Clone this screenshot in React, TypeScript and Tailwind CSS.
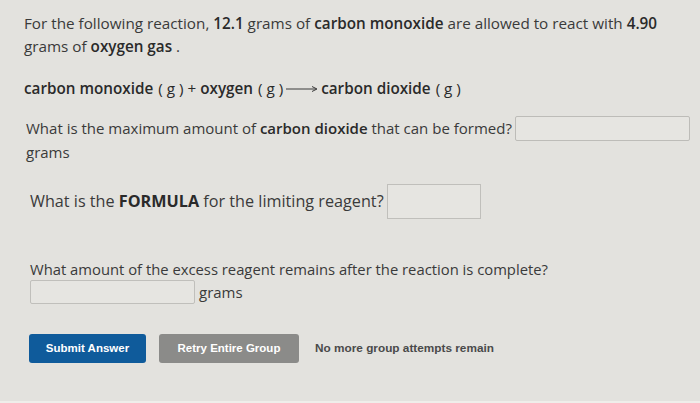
import React from "react";

function Arrow() {
  return (
    <svg width="34" height="10" viewBox="0 0 34 10" className="inline-block mx-[2px]">
      <line x1="1" y1="5" x2="31" y2="5" stroke="#3b3b3b" strokeWidth="1" />
      <path d="M27 2.5 L32 5 L27 7.5" fill="none" stroke="#3b3b3b" strokeWidth="1" />
    </svg>
  );
}

export default function App() {
  return (
    <div className="w-[700px] h-[403px] bg-[#e3e2de] font-['Open_Sans',sans-serif] text-[#3a3a3a] overflow-hidden flex flex-col">
      <div className="flex-1 pl-[24px] pt-[12px]">
        <p className="text-[15.25px] leading-[23px] w-[670px]">
          For the following reaction, <b className="font-semibold text-[#2a2a2a]">12.1</b> grams of{" "}
          <b className="font-semibold text-[#2a2a2a]">carbon monoxide</b> are allowed to react with{" "}
          <b className="font-semibold text-[#2a2a2a]">4.90</b>
          <br />
          grams of <b className="font-semibold text-[#2a2a2a]">oxygen gas</b> .
        </p>
        <p className="mt-[19px] text-[15.25px] leading-[23px] font-semibold text-[#2a2a2a] flex items-center">
          <span>carbon monoxide</span>
          <span className="font-normal ml-[5px]">( g )</span>
          <span className="font-normal mx-[4px]">+</span>
          <span>oxygen</span>
          <span className="font-normal ml-[5px]">( g )</span>
          <Arrow />
          <span>carbon dioxide</span>
          <span className="font-normal ml-[5px]">( g )</span>
        </p>
        <div className="mt-[16px] ml-[2px] flex items-center">
          <span className="text-[15px] leading-[23px]">
            What is the maximum amount of <b className="font-semibold text-[#2a2a2a]">carbon dioxide</b> that can be formed?
          </span>
          <div className="ml-[3px] w-[175px] h-[25px] border border-[#bdbcb8] rounded-[2px] bg-[#e6e5e1]" />
        </div>
        <p className="ml-[2px] text-[15px] leading-[23px]">grams</p>
        <div className="mt-[20px] ml-[6px] flex items-center">
          <span className="text-[16.2px] leading-[23px]">
            What is the <b className="font-bold text-[#2a2a2a]">FORMULA</b> for the limiting reagent?
          </span>
          <div className="ml-[3px] w-[94px] h-[35px] border border-[#c0bfbb] bg-[#e6e5e1]" />
        </div>
        <p className="mt-[39px] ml-[6px] text-[14.8px] leading-[22px]">
          What amount of the excess reagent remains after the reaction is complete?
        </p>
        <div className="ml-[6px] flex items-center">
          <div className="w-[165px] h-[24px] border border-[#c0bfbb] rounded-[2px] bg-[#e6e5e1]" />
          <span className="ml-[4px] text-[15px] leading-[23px]">grams</span>
        </div>
        <div className="mt-[30px] ml-[5px] flex items-center font-['Liberation_Sans',Arial,sans-serif] font-bold text-[11.5px]">
          <div className="w-[117px] h-[29px] rounded-[3px] bg-[#0f5b9b] text-white flex items-center justify-center">
            Submit Answer
          </div>
          <div className="ml-[13px] w-[140px] h-[29px] rounded-[3px] bg-[#8b8b89] text-white flex items-center justify-center">
            Retry Entire Group
          </div>
          <span className="ml-[16px] text-[#4a4a4a] text-[11.8px]">No more group attempts remain</span>
        </div>
      </div>
      <div className="h-[2px] bg-[#efeeea]" />
    </div>
  );
}
